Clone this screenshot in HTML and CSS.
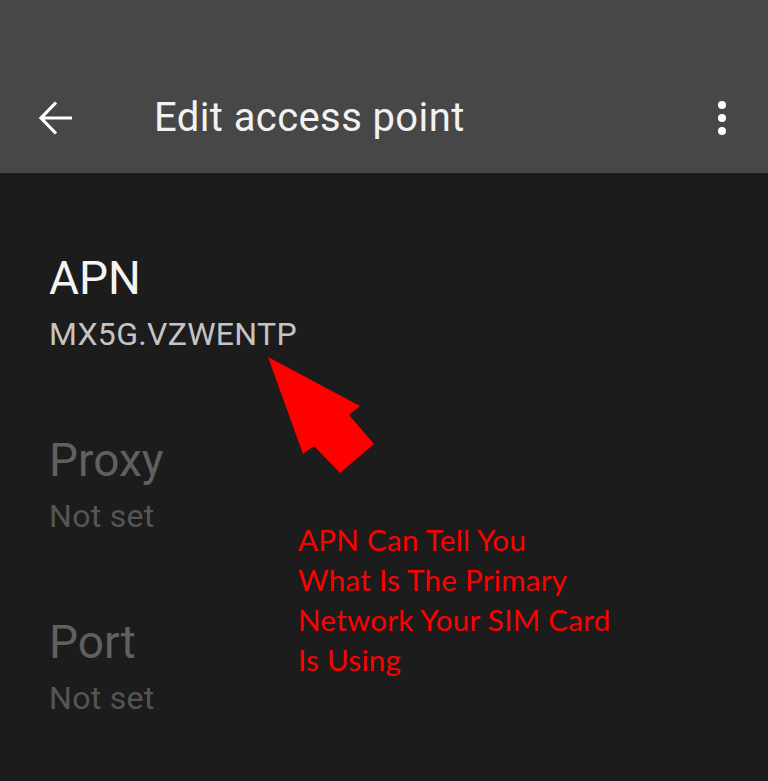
FILE: index.html
```html
<!DOCTYPE html>
<html>
<head>
<meta charset="utf-8">
<link rel="stylesheet" href="styles.css">
</head>
<body>
<div class="screen">
  <header class="appbar">
    <div class="status"></div>
    <div class="toolbar">
      <svg class="back" width="36" height="36" viewBox="0 0 36 36"><path d="M34 18H4M18 2.5L3 18l15 15.5" fill="none" stroke="#fff" stroke-width="3.2" stroke-linejoin="miter"/></svg>
      <h1 class="title">Edit access point</h1>
      <svg class="more" width="12" height="36" viewBox="0 0 12 36"><circle cx="6" cy="5" r="4" fill="#fff"/><circle cx="6" cy="18" r="4" fill="#fff"/><circle cx="6" cy="31" r="4" fill="#fff"/></svg>
    </div>
  </header>
  <main class="list">
    <div class="pref">
      <div class="pref-title">APN</div>
      <div class="pref-summary">MX5G.VZWENTP</div>
    </div>
    <div class="pref disabled">
      <div class="pref-title">Proxy</div>
      <div class="pref-summary">Not set</div>
    </div>
    <div class="pref disabled">
      <div class="pref-title">Port</div>
      <div class="pref-summary">Not set</div>
    </div>
    <svg class="arrow" width="120" height="130" viewBox="260 350 120 130"><polygon points="268,357 360,406 349,415 374,444 340,473 314,446 303,454" fill="#ff0000"/></svg>
    <p class="note">APN Can Tell You<br>What Is The Primary<br>Network Your SIM Card<br>Is Using</p>
  </main>
</div>
</body>
</html>
```
FILE: styles.css
```css
html, body {
  margin: 0;
  padding: 0;
  background: #1c1c1c;
}
.screen {
  width: 768px;
  height: 781px;
  overflow: hidden;
  font-family: Roboto, "Noto Sans", sans-serif;
}
.appbar {
  background: #474747;
  height: 173px;
  display: flex;
  flex-direction: column;
}
.status {
  height: 70px;
}
.toolbar {
  flex: 1;
  display: flex;
  align-items: center;
  padding: 0 40px 0 38px;
  padding-bottom: 8px;
}
.back {
  flex: none;
}
.title {
  margin: 0 0 0 80px;
  flex: 1;
  font-weight: 400;
  font-size: 40px;
  color: #f2f2f2;
  letter-spacing: 0.4px;
}
.more {
  flex: none;
}
.list {
  position: relative;
  height: 608px;
  padding: 78px 0 0 49px;
  box-sizing: border-box;
}
.pref {
  height: 182px;
}
.pref-title {
  font-size: 46px;
  line-height: 54px;
  color: #f4f4f4;
}
.pref-summary {
  font-size: 32px;
  line-height: 40px;
  margin-top: 9px;
  color: #c4c4c4;
  letter-spacing: 0.3px;
}
.pref.disabled .pref-title {
  color: #606060;
}
.pref.disabled .pref-summary {
  color: #555555;
}
.arrow {
  position: absolute;
  left: 260px;
  top: 177px;
}
.note {
  position: absolute;
  left: 298px;
  top: 347px;
  margin: 0;
  font-family: Lato, "Open Sans", sans-serif;
  font-size: 29.5px;
  line-height: 40px;
  letter-spacing: 0.3px;
  color: #ff0000;
}
```
